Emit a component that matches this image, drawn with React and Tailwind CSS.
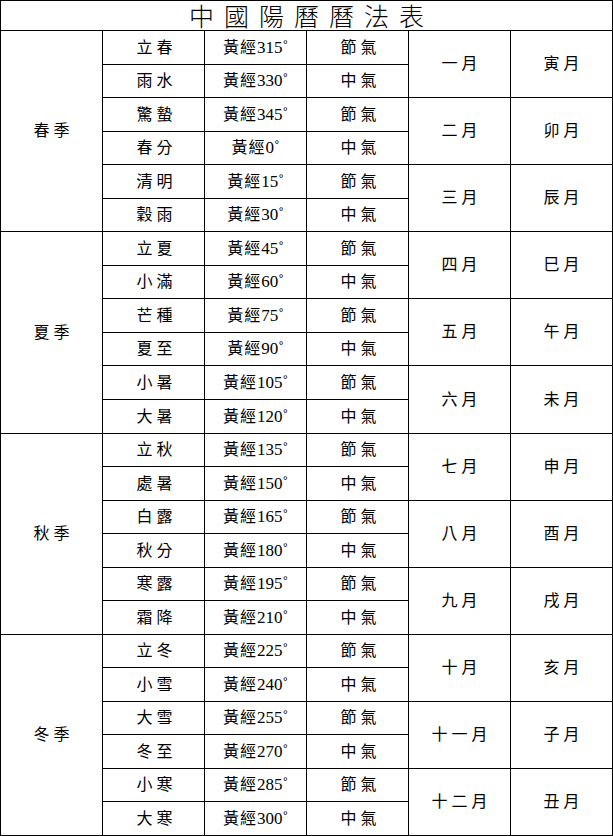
const rows = [
  ["立春", "315"], ["雨水", "330"], ["驚蟄", "345"], ["春分", "0"], ["清明", "15"], ["穀雨", "30"],
  ["立夏", "45"], ["小滿", "60"], ["芒種", "75"], ["夏至", "90"], ["小暑", "105"], ["大暑", "120"],
  ["立秋", "135"], ["處暑", "150"], ["白露", "165"], ["秋分", "180"], ["寒露", "195"], ["霜降", "210"],
  ["立冬", "225"], ["小雪", "240"], ["大雪", "255"], ["冬至", "270"], ["小寒", "285"], ["大寒", "300"],
];
const seasons = ["春季", "夏季", "秋季", "冬季"];
const months = [
  ["一月", "寅月"], ["二月", "卯月"], ["三月", "辰月"], ["四月", "巳月"], ["五月", "午月"], ["六月", "未月"],
  ["七月", "申月"], ["八月", "酉月"], ["九月", "戌月"], ["十月", "亥月"], ["十一月", "子月"], ["十二月", "丑月"],
];

const cell = "bg-white flex items-center justify-center";

export default function App() {
  return (
    <div
      className="w-[613px] h-[836px] bg-black p-px gap-px grid grid-cols-[101px_101px_101px_101px_101px_101px] grid-rows-[29px_33px_32px_33px_32px_33px_32px_33px_32px_33px_32px_33px_33px_32px_33px_32px_33px_32px_33px_32px_33px_32px_33px_32px_33px] text-black text-[16px]"
      style={{ fontFamily: '"Liberation Serif", "Noto Sans CJK TC", serif' }}
    >
      <div
        className={`${cell} col-span-6 text-[25px] font-light tracking-[10px] pl-[10px] leading-[29px] overflow-visible`}
        style={{ fontFamily: '"Noto Sans CJK TC", sans-serif' }}
      >
        中國陽曆曆法表
      </div>
      {rows.map(([term, deg], i) => (
        <>
          {i % 6 == 0 && (
            <div className={`${cell} row-span-6 tracking-[4px] pl-[4px]`}>{seasons[i / 6]}</div>
          )}
          <div className={`${cell} tracking-[4px] pl-[6px]`}>{term}</div>
          <div className={`${cell}`}>
            <span className="tracking-[1px]">黃經</span>
            <span className="text-[17px]">{deg}˚</span>
          </div>
          <div className={`${cell} tracking-[4px] pl-[6px]`}>{i % 2 == 0 ? "節氣" : "中氣"}</div>
          {i % 2 == 0 && (
            <>
              <div className={`${cell} row-span-2 tracking-[4px] pl-[4px]`}>{months[i / 2][0]}</div>
              <div className={`${cell} row-span-2 tracking-[4px] pl-[4px]`}>{months[i / 2][1]}</div>
            </>
          )}
        </>
      ))}
    </div>
  );
}
